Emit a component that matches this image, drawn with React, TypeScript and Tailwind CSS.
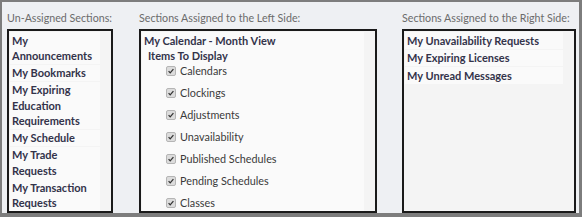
import React from 'react';

const unassigned = ['My Announcements', 'My Bookmarks', 'My Expiring Education Requirements', 'My Schedule', 'My Trade Requests', 'My Transaction Requests'];
const rightSide = ['My Unavailability Requests', 'My Expiring Licenses', 'My Unread Messages'];
const displayItems = ['Calendars', 'Clockings', 'Adjustments', 'Unavailability', 'Published Schedules', 'Pending Schedules', 'Classes'];

const CheckMark: React.FC = () => (
  <span className="flex h-[10px] w-[10px] shrink-0 items-center justify-center rounded-[2px] border border-[#b5b5b5] bg-[#dcdcdc]">
    <svg viewBox="0 0 10 10" className="h-[8px] w-[8px]">
      <path d="M2 5.2 L4 7.3 L8 2.6" fill="none" stroke="#333" strokeWidth="1.6" />
    </svg>
  </span>
);

export default function App() {
  return (
    <div className="h-[217px] w-[582px] overflow-hidden border-t-2 border-l-2 border-r-[3px] border-b-[4px] border-[#7d7d7d] bg-[#eef0f3] font-['Lato',sans-serif]">
      <div className="flex h-full pl-[5px] pt-[9px]">
        <div className="flex w-[106px] shrink-0 flex-col">
          <div className="h-[18px] whitespace-nowrap text-[10.7px] leading-[14px] text-[#6b6b6b]">Un-Assigned Sections:</div>
          <div className="flex-1 overflow-hidden border-2 border-[#1a1a1a] bg-[#f4f4f4] px-[1px] pt-[1px]">
            {unassigned.map((t) => (
              <div key={t} className="mb-[0.5px] w-[90px] bg-[#fafafa] px-[2px] py-[0.5px] text-[11px] font-bold leading-[15.5px] text-[#33334a]">
                {t}
              </div>
            ))}
          </div>
        </div>
        <div className="ml-[26px] flex w-[238px] shrink-0 flex-col">
          <div className="h-[18px] whitespace-nowrap text-[10.7px] leading-[14px] text-[#6b6b6b]">Sections Assigned to the Left Side:</div>
          <div className="flex-1 overflow-hidden border-2 border-[#1a1a1a] bg-[#f4f4f4] px-[1px] pt-[1px]">
            <div className="mr-[10px] bg-[#fafafa] px-[2px] pb-[6px] pt-[1px]">
              <div className="text-[11px] font-bold leading-[15px] text-[#33334a]">My Calendar - Month View</div>
              <div className="pl-[4px] text-[11px] font-bold leading-[15px] text-[#33334a]">Items To Display</div>
              <div className="flex flex-col gap-[7px] pl-[22px]">
                {displayItems.map((t) => (
                  <div key={t} className="flex items-center gap-[4px] text-[10.8px] leading-[15px] text-[#3a3a3a]">
                    <CheckMark />
                    <span>{t}</span>
                  </div>
                ))}
              </div>
            </div>
          </div>
        </div>
        <div className="ml-[25px] flex w-[174px] shrink-0 flex-col">
          <div className="h-[18px] whitespace-nowrap text-[10.7px] leading-[14px] text-[#6b6b6b]">Sections Assigned to the Right Side:</div>
          <div className="flex-1 overflow-hidden border-2 border-[#1a1a1a] bg-[#f4f4f4] px-[1px] pt-[1px]">
            {rightSide.map((t) => (
              <div key={t} className="mb-[1px] mr-[10px] bg-[#fafafa] px-[2px] py-[0.5px] text-[11px] font-bold leading-[15.5px] text-[#33334a]">
                {t}
              </div>
            ))}
          </div>
        </div>
      </div>
    </div>
  );
}
